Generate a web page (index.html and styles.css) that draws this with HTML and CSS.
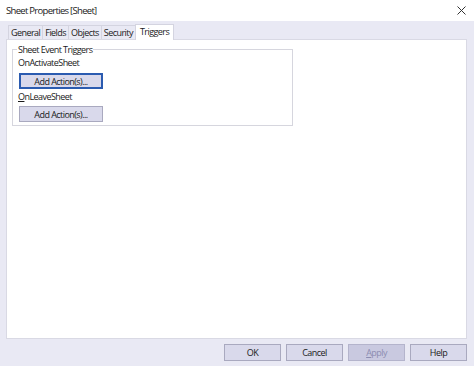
FILE: index.html
```html
<!DOCTYPE html>
<html lang="en">
  <head>
    <meta charset="UTF-8" />
    <title>Sheet Properties [Sheet]</title>
    <link rel="stylesheet" href="styles.css">
  </head>
  <body>
    <div class="dialog">
      <div class="titlebar">
        <span class="title">Sheet Properties [Sheet]</span>
        <svg class="close" width="9" height="9" viewBox="0 0 9 9">
          <path d="M0.5 0.5 L8.5 8.5 M8.5 0.5 L0.5 8.5" stroke="#333" stroke-width="1" fill="none" />
        </svg>
      </div>
      <div class="body">
        <div class="tabs">
          <div class="tab">General</div>
          <div class="tab">Fields</div>
          <div class="tab">Objects</div>
          <div class="tab">Security</div>
          <div class="tab active">Triggers</div>
        </div>
        <div class="panel">
          <fieldset class="group">
            <legend>Sheet Event Triggers</legend>
            <div class="label">OnActivateSheet</div>
            <button class="btn focused">Add Action(s)...</button>
            <div class="label"><u>O</u>nLeaveSheet</div>
            <button class="btn">Add Action(s)...</button>
          </fieldset>
        </div>
        <div class="footer">
          <button class="btn wide">OK</button>
          <button class="btn wide">Cancel</button>
          <button class="btn wide disabled"><u>A</u>pply</button>
          <button class="btn wide">Help</button>
        </div>
      </div>
    </div>
  </body>
</html>
```

FILE: styles.css
```css
:root {
  --lavender: #e9e9f4;
  --btn: #d9d9eb;
  --btn-border: #a9a9bf;
  --text: #1a1a1a;
}
* {
  box-sizing: border-box;
}
html,
body {
  margin: 0;
  padding: 0;
}
body {
  width: 474px;
  height: 366px;
  overflow: hidden;
  font-family: "Open Sans", "Noto Sans", sans-serif;
  font-size: 9px;
  letter-spacing: -0.55px;
  color: var(--text);
  background: var(--lavender);
}
.dialog {
  display: flex;
  flex-direction: column;
  height: 366px;
}
.titlebar {
  height: 21px;
  background: #ffffff;
  display: flex;
  align-items: center;
  justify-content: space-between;
  padding: 0 8px 0 6px;
}
.title {
  font-size: 9.5px;
  letter-spacing: -0.7px;
}
.body {
  flex: 1;
  display: flex;
  flex-direction: column;
  padding: 3px 7px 0 6px;
  background: var(--lavender);
}
.tabs {
  display: flex;
  padding-left: 2px;
  height: 15px;
  align-items: flex-end;
}
.tab {
  height: 14px;
  line-height: 13px;
  padding: 0 2px;
  border: 1px solid #d4d4e0;
  border-bottom: none;
  margin-right: -1px;
  background: var(--lavender);
}
.tab.active {
  height: 16px;
  line-height: 14px;
  background: #ffffff;
  padding: 0 4px;
  position: relative;
  top: 1px;
}
.panel {
  height: 300px;
  background: #ffffff;
  border: 1px solid #d9d9e4;
  padding: 2px 173px 0 5px;
}
.group {
  margin: 0;
  border: 1px solid #d6d6de;
  padding: 0 0 3px 5px;
}
.group legend {
  padding: 0 1px;
  margin-left: -1px;
  line-height: 15px;
}
.label {
  height: 12px;
  line-height: 12px;
  margin: 0 0 4px 0;
}
.btn + .label {
  margin-top: 2px;
  margin-bottom: 3px;
}
.btn {
  display: block;
  width: 84px;
  height: 16px;
  margin-left: 1px;
  padding: 0;
  background: var(--btn);
  border: 1px solid var(--btn-border);
  font-family: inherit;
  font-size: 9px;
  letter-spacing: -0.55px;
  color: var(--text);
  line-height: 13px;
}
.btn.focused {
  border: 2px solid #2b5bb0;
}
.footer {
  flex: 1;
  display: flex;
  justify-content: flex-end;
  align-items: flex-start;
  gap: 5px;
  padding-top: 5px;
}
.btn.wide {
  width: 57px;
  height: 17px;
  margin: 0;
}
.btn.disabled {
  background: #c9c9e0;
  color: #8c8cb0;
  border-color: #b4b4cc;
}
```
